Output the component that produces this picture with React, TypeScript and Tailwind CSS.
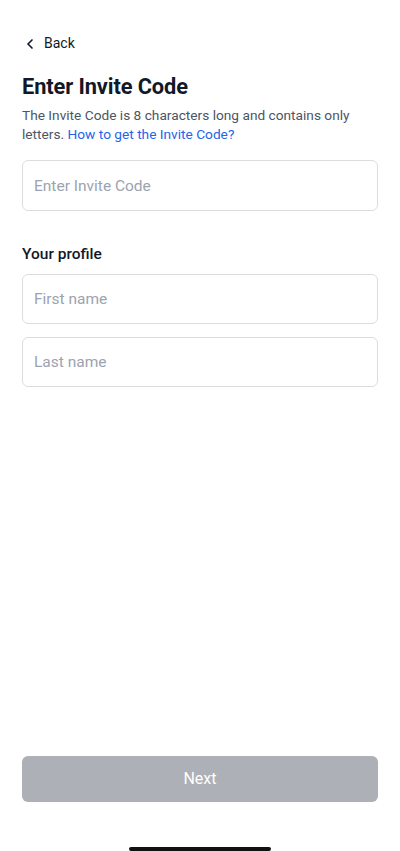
import { ChevronLeft } from "lucide-react";

const profileFields = ["First name", "Last name"];

export default function App() {
  return (
    <div className="flex h-[851px] w-[400px] flex-col bg-white font-['Roboto',sans-serif] text-[#111827]">
      <div className="px-[22px] pt-[33px]">
        <button className="flex items-center gap-[6px] text-[14px] text-[#111827]">
          <ChevronLeft className="size-[16px]" strokeWidth={2.5} />
          Back
        </button>

        <h1 className="mt-[19px] text-[21.8px] font-bold leading-[28px] tracking-[-0.1px]">
          Enter Invite Code
        </h1>
        <p className="mt-[5px] text-[13.7px] leading-[19px] text-[#4b5563]">
          The Invite Code is 8 characters long and contains only letters.{" "}
          <a href="#" className="text-[#2563eb]">
            How to get the Invite Code?
          </a>
        </p>

        <input
          placeholder="Enter Invite Code"
          className="mt-[16px] h-[51px] w-full rounded-[6px] border border-[#dcdde0] px-[11px] text-[15.5px] placeholder:text-[#9ca3af] outline-none"
        />

        <h2 className="mt-[33px] text-[15.5px] font-medium leading-[20px]">
          Your profile
        </h2>
        <div className="mt-[10px] flex flex-col gap-[13px]">
          {profileFields.map((label) => (
            <input
              key={label}
              placeholder={label}
              className="h-[50px] w-full rounded-[6px] border border-[#dcdde0] px-[11px] text-[15.5px] placeholder:text-[#9ca3af] outline-none"
            />
          ))}
        </div>
      </div>

      <div className="mt-auto px-[22px]">
        <button
          disabled
          className="h-[46px] w-full rounded-[6px] bg-[#adb0b6] text-[16px] text-white"
        >
          Next
        </button>
        <div className="mt-[45px] flex justify-center">
          <div className="h-[4px] w-[142px] rounded-full bg-[#111111]" />
        </div>
      </div>
    </div>
  );
}
